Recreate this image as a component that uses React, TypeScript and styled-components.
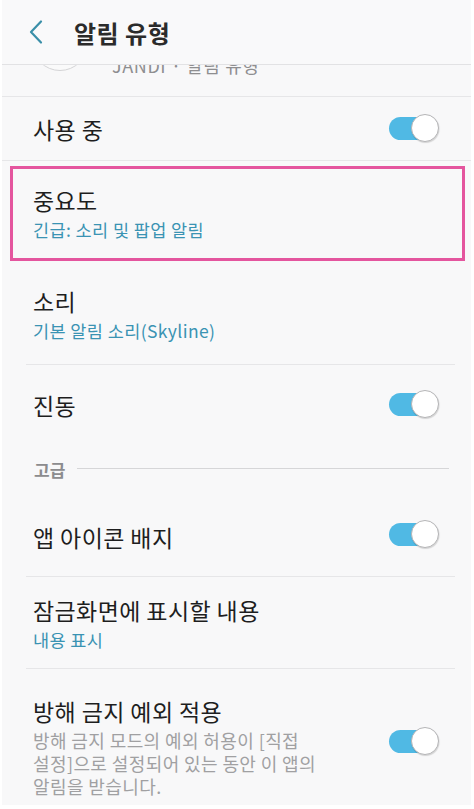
import React from 'react';
import styled, { createGlobalStyle } from 'styled-components';

const GlobalStyle = createGlobalStyle`
  html, body {
    margin: 0;
    padding: 0;
    background: #ffffff;
  }
  body {
    font-family: 'Noto Sans CJK KR', 'Noto Sans', Roboto, sans-serif;
    -webkit-font-smoothing: antialiased;
  }
`;

const Screen = styled.div`
  width: 469px;
  height: 805px;
  margin: 0 3px 0 2px;
  background: #f8f8f9;
  overflow: hidden;
  display: flex;
  flex-direction: column;
`;

const Header = styled.header`
  height: 64px;
  flex-shrink: 0;
  display: flex;
  align-items: center;
  border-bottom: 1px solid #e2e2e4;
  background: #f9f9fa;
`;

const BackButton = styled.button`
  width: 72px;
  height: 64px;
  border: 0;
  background: none;
  padding: 0 0 0 26px;
  display: flex;
  align-items: center;
`;

const Title = styled.h1`
  margin: 0;
  font-size: 24px;
  font-weight: 700;
  color: #2b2b2b;
  letter-spacing: 0.5px;
`;

const ScrolledRow = styled.div`
  height: 31px;
  flex-shrink: 0;
  overflow: hidden;
  border-bottom: 1px solid #e6e6e8;
  display: flex;
  align-items: flex-start;
  gap: 24px;
  padding-left: 30px;
`;

const AppIcon = styled.div`
  width: 56px;
  height: 56px;
  margin-top: -50px;
  border-radius: 50%;
  border: 1.5px solid #d4d4d6;
  background: #fafafa;
  box-sizing: border-box;
  flex-shrink: 0;
`;

const AppCaption = styled.span`
  margin-top: -14px;
  font-size: 18px;
  line-height: 28px;
  color: #8e8e90;
  letter-spacing: 0.6px;
`;

const Row = styled.div<{ $h: number; $pt?: number; $divider?: 'full' | 'inset' }>`
  height: ${(p) => p.$h}px;
  flex-shrink: 0;
  box-sizing: border-box;
  display: flex;
  align-items: center;
  padding: ${(p) => p.$pt ?? 0}px 32px 0 31px;
  position: relative;
  ${(p) => p.$divider === 'full' && `border-bottom: 1px solid #e6e6e8;`}
  ${(p) =>
    p.$divider === 'inset' &&
    `&::after {
      content: '';
      position: absolute;
      left: 24px;
      right: 16px;
      bottom: 0;
      height: 1px;
      background: #e6e6e8;
    }`}
`;

const Highlight = styled.div`
  margin: 5px 6px 0 8px;
  height: 95px;
  box-sizing: border-box;
  border: 3px solid #e4559e;
  display: flex;
  align-items: center;
  padding: 2px 0 0 20px;
  flex-shrink: 0;
`;

const Texts = styled.div`
  flex: 1;
  display: flex;
  flex-direction: column;
`;

const Label = styled.div`
  font-size: 23px;
  color: #1e1e1e;
  line-height: 30px;
  letter-spacing: 0.4px;
`;

const Sub = styled.div`
  font-size: 17.5px;
  color: #3a93b3;
  line-height: 29px;
  letter-spacing: 0.4px;
`;

const Desc = styled.div`
  font-size: 18px;
  color: #a0a0a2;
  line-height: 23px;
  margin-top: 3px;
  letter-spacing: 0.4px;
  max-width: 300px;
  word-break: keep-all;
`;

const Switch = styled.div<{ $shift?: number }>`
  width: 50px;
  height: 29px;
  position: relative;
  flex-shrink: 0;
  margin-left: 16px;
  margin-bottom: ${(p) => p.$shift ?? 0}px;
`;

const Track = styled.div`
  position: absolute;
  left: 0;
  right: 3px;
  top: 3px;
  height: 23px;
  border-radius: 12px;
  background: #50b9e4;
`;

const Thumb = styled.div`
  position: absolute;
  right: 0;
  top: 0;
  width: 28px;
  height: 28px;
  border-radius: 50%;
  background: #ffffff;
  border: 1px solid #b5b5b7;
  box-sizing: border-box;
  box-shadow: 0.5px 1px 1px rgba(0, 0, 0, 0.15);
`;

const SectionHead = styled.div`
  height: 47px;
  flex-shrink: 0;
  display: flex;
  align-items: center;
  gap: 12px;
  padding: 3px 22px 0 32px;
  box-sizing: border-box;
`;

const SectionTitle = styled.span`
  font-size: 17px;
  font-weight: 700;
  color: #8c8c8e;
`;

const SectionLine = styled.div`
  flex: 1;
  height: 1px;
  margin-top: -2px;
  background: #d6d6d8;
`;

function Toggle({ shift }: { shift?: number }) {
  return (
    <Switch $shift={shift}>
      <Track />
      <Thumb />
    </Switch>
  );
}

export default function App() {
  return (
    <>
      <GlobalStyle />
      <Screen>
        <Header>
          <BackButton aria-label="back">
            <svg width="16" height="26" viewBox="0 0 16 26" fill="none">
              <path d="M13 2.5 L3 13 L13 23.5" stroke="#3a8fa8" strokeWidth="2.2" strokeLinecap="round" strokeLinejoin="round" />
            </svg>
          </BackButton>
          <Title>알림 유형</Title>
        </Header>

        <ScrolledRow>
          <AppIcon />
          <AppCaption>JANDI · 알림 유형</AppCaption>
        </ScrolledRow>

        <Row $h={64} $divider="full">
          <Texts>
            <Label>사용 중</Label>
          </Texts>
          <Toggle />
        </Row>

        <Highlight>
          <Texts>
            <Label>중요도</Label>
            <Sub>긴급: 소리 및 팝업 알림</Sub>
          </Texts>
        </Highlight>

        <Row $h={104} $pt={5} $divider="inset">
          <Texts>
            <Label>소리</Label>
            <Sub>기본 알림 소리(Skyline)</Sub>
          </Texts>
        </Row>

        <Row $h={79}>
          <Texts>
            <Label>진동</Label>
          </Texts>
          <Toggle />
        </Row>

        <SectionHead>
          <SectionTitle>고급</SectionTitle>
          <SectionLine />
        </SectionHead>

        <Row $h={86} $pt={5} $divider="inset">
          <Texts>
            <Label>앱 아이콘 배지</Label>
          </Texts>
          <Toggle shift={5} />
        </Row>

        <Row $h={92} $pt={2} $divider="inset">
          <Texts>
            <Label>잠금화면에 표시할 내용</Label>
            <Sub>내용 표시</Sub>
          </Texts>
        </Row>

        <Row $h={155}>
          <Texts>
            <Label>방해 금지 예외 적용</Label>
            <Desc>
              방해 금지 모드의 예외 허용이 [직접 설정]으로 설정되어 있는 동안 이 앱의 알림을 받습니다.
            </Desc>
          </Texts>
          <Toggle shift={10} />
        </Row>
      </Screen>
    </>
  );
}
